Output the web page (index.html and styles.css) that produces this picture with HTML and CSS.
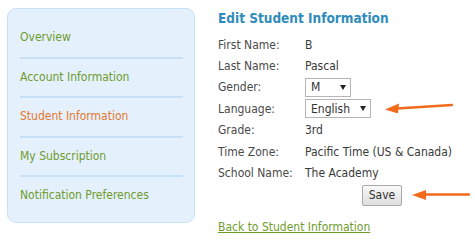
FILE: index.html
```html
<!DOCTYPE html>
<html lang="en">
<head>
    <meta charset="UTF-8">
    <title>Edit Student Information</title>
    <link rel="stylesheet" href="styles.css">
</head>
<body>
    <div id="page">
        <div class="sidebar">
            <a class="side-link" href="#">Overview</a>
            <a class="side-link" href="#">Account Information</a>
            <a class="side-link active" href="#">Student Information</a>
            <a class="side-link" href="#">My Subscription</a>
            <a class="side-link" href="#">Notification Preferences</a>
        </div>

        <div class="main">
            <h2>Edit Student Information</h2>
            <div class="fields">
                <span class="label">First Name:</span><span class="value">B</span>
                <span class="label">Last Name:</span><span class="value">Pascal</span>
                <span class="label">Gender:</span>
                <span class="value"><span class="select gender">M <i class="caret"></i></span></span>
                <span class="label">Language:</span>
                <span class="value">
                    <span class="select lang">English <i class="caret"></i></span>
                    <svg class="arrow arrow-lang" width="68" height="10" viewBox="0 0 68 10">
                        <path d="M67 2 L12 5.5" stroke="#f26b1d" stroke-width="2.5" stroke-linecap="round"/>
                        <path d="M0 6.5 L14 0.5 L13 10.5 Z" fill="#f26b1d"/>
                    </svg>
                </span>
                <span class="label">Grade:</span><span class="value">3rd</span>
                <span class="label">Time Zone:</span><span class="value">Pacific Time (US &amp; Canada)</span>
                <span class="label">School Name:</span><span class="value">The Academy</span>
            </div>
            <div class="save-row">
                <button class="save">Save</button>
                <svg class="arrow" width="58" height="10" viewBox="0 0 58 10">
                    <path d="M57 4.5 L12 4.5" stroke="#f26b1d" stroke-width="2.5" stroke-linecap="round"/>
                    <path d="M0 5 L14 0 L14 10 Z" fill="#f26b1d"/>
                </svg>
            </div>
            <a class="back" href="#">Back to Student Information</a>
        </div>
    </div>
</body>
</html>
```

FILE: styles.css
```css
*{
    padding: 0;
    margin: 0;
    box-sizing: border-box;
}
body{
    background: #fff;
    font-family: "DejaVu Sans Condensed", "DejaVu Sans", sans-serif;
    font-size: 12px;
    color: #444;
}
#page{
    display: flex;
    padding: 8px 0 0 7px;
}
.sidebar{
    width: 188px;
    height: 215px;
    background: #e4f0fb;
    border: 1px solid #c9e1f5;
    border-radius: 9px;
    padding: 10px 11px 0 12px;
    display: flex;
    flex-direction: column;
}
.side-link{
    display: block;
    height: 39.5px;
    line-height: 36px;
    color: #6f9c2d;
    text-decoration: none;
    border-bottom: 2px solid #c8e0f5;
}
.side-link:last-child{
    border-bottom: none;
}
.side-link.active{
    color: #e7772f;
}
.main{
    margin-left: 23px;
    padding-top: 1px;
}
h2{
    font-size: 13.5px;
    font-weight: bold;
    color: #2f8cba;
    line-height: 18px;
    margin-bottom: 7px;
}
.fields{
    display: grid;
    grid-template-columns: 87px auto;
    grid-auto-rows: 21.4px;
    align-items: center;
}
.label{
    color: #4a4a4a;
}
.value{
    display: flex;
    align-items: center;
    color: #3a3a3a;
}
.select{
    display: inline-flex;
    align-items: center;
    height: 19px;
    border: 1px solid #b5b5b5;
    background: #fff;
    padding: 0 4px 0 5px;
    color: #333;
}
.gender{
    width: 46px;
}
.lang{
    width: 66px;
}
.caret{
    margin-left: auto;
    width: 0;
    height: 0;
    border-left: 3px solid transparent;
    border-right: 3px solid transparent;
    border-top: 5px solid #222;
}
.arrow-lang{
    margin-left: 14px;
    margin-top: -2px;
}
.save-row{
    display: flex;
    align-items: center;
    padding-left: 144px;
    margin-top: 1px;
}
.save{
    font-family: inherit;
    font-size: 12px;
    color: #333;
    width: 40px;
    height: 21px;
    border: 1px solid #aaa;
    border-radius: 2px;
    background: linear-gradient(#f8f8f8, #dedede);
    margin-right: 10px;
}
.back{
    display: inline-block;
    margin-top: 14px;
    color: #6f9c2d;
    text-decoration: underline;
}
```
